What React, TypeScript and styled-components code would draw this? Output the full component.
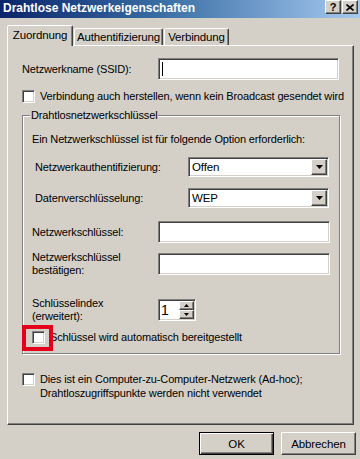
import React from 'react'
import styled, { createGlobalStyle } from 'styled-components'

const GlobalStyle = createGlobalStyle`
  html, body {
    margin: 0;
    padding: 0;
    background: #d4d0c8;
  }
  * {
    box-sizing: border-box;
  }
`

const Window = styled.div`
  width: 360px;
  height: 459px;
  display: flex;
  flex-direction: column;
  background: #d4d0c8;
  font-family: "Liberation Sans", Arial, sans-serif;
  font-size: 11px;
  letter-spacing: -0.15px;
  color: #000;
  overflow: hidden;
`

const TitleBar = styled.div`
  height: 18px;
  display: flex;
  align-items: center;
  justify-content: space-between;
  padding: 0 2px 3px 3px;
  background: linear-gradient(90deg, #0a246a 0%, #3a6ea5 45%, #a6caf0 100%);
`

const TitleText = styled.span`
  color: #fff;
  font-weight: bold;
  font-size: 12px;
  letter-spacing: 0;
`

const TitleButtons = styled.div`
  display: flex;
  gap: 1px;
  align-self: flex-start;
`

const TitleButton = styled.div`
  width: 16px;
  height: 14px;
  display: flex;
  align-items: center;
  justify-content: center;
  background: #d4d0c8;
  border: 1px solid;
  border-color: #fff #404040 #404040 #fff;
  box-shadow: inset -1px -1px #808080;
  font-weight: bold;
  font-size: 11px;
  line-height: 1;
`

const TabStrip = styled.div`
  height: 20px;
  margin-top: 7px;
  padding-left: 7px;
  display: flex;
  align-items: flex-end;
  position: relative;
  z-index: 1;
`

const Tab = styled.div<{ $active?: boolean; $w: number }>`
  width: ${p => p.$w}px;
  height: ${p => (p.$active ? '21px' : '17px')};
  margin-bottom: ${p => (p.$active ? '-1px' : '0')};
  margin-left: ${p => (p.$active ? '0' : '1px')};
  padding-top: ${p => (p.$active ? '3px' : '2px')};
  text-align: center;
  background: #d4d0c8;
  border: 1px solid;
  border-bottom: none;
  border-color: #fff #404040 transparent #fff;
  border-radius: 2px 2px 0 0;
  box-shadow: inset -1px 0 #808080;
  white-space: nowrap;
  font-size: 11.5px;
`

const Panel = styled.div`
  height: 380px;
  margin: 0 6px 0 7px;
  padding: 12px 13px 0 14px;
  display: flex;
  flex-direction: column;
  border: 1px solid;
  border-color: #fff #404040 #404040 #fff;
  box-shadow: inset -1px -1px #808080;
`

const FieldRow = styled.div<{ $h: number; $mt: number; $indent?: number }>`
  height: ${p => p.$h}px;
  margin-top: ${p => p.$mt}px;
  padding-left: ${p => p.$indent ?? 0}px;
  display: flex;
  align-items: center;
`

const Label = styled.div<{ $w: number }>`
  width: ${p => p.$w}px;
  flex: none;
  line-height: 13px;
`

const Sunken = styled.div<{ $w: number; $h?: number }>`
  width: ${p => p.$w}px;
  height: ${p => p.$h ?? 22}px;
  flex: none;
  position: relative;
  display: flex;
  align-items: center;
  background: #fff;
  border: 1px solid;
  border-color: #808080 #fff #fff #808080;
  box-shadow: inset 1px 1px #404040, inset -1px -1px #d4d0c8;
`

const Caret = styled.span`
  width: 1px;
  height: 14px;
  margin-left: 3px;
  background: #000;
`

const SelectValue = styled.span`
  flex: 1;
  padding-left: 3px;
  font-size: 11.5px;
`

const Raised = styled.div`
  background: #d4d0c8;
  border: 1px solid;
  border-color: #fff #404040 #404040 #fff;
  box-shadow: inset -1px -1px #808080;
  display: flex;
  align-items: center;
  justify-content: center;
`

const DropButton = styled(Raised)`
  width: 16px;
  height: 16px;
  margin-right: 1px;
`

const SpinValue = styled.span`
  flex: 1;
  padding-left: 2px;
  font-size: 14px;
`

const SpinButtons = styled.div`
  display: flex;
  flex-direction: column;
  align-self: stretch;
  padding: 1px 1px 1px 0;
`

const SpinButton = styled(Raised)`
  width: 15px;
  flex: 1;
`

const CheckRow = styled.div<{ $mt: number; $indent?: number; $gap?: number }>`
  margin-top: ${p => p.$mt}px;
  padding-left: ${p => p.$indent ?? 0}px;
  display: flex;
  align-items: flex-start;
  gap: ${p => p.$gap ?? 5}px;
  line-height: 14px;
  white-space: nowrap;
`

const CheckBox = styled.span`
  width: 13px;
  height: 13px;
  flex: none;
  margin-top: 1px;
  position: relative;
  background: #fff;
  border: 1px solid;
  border-color: #808080 #fff #fff #808080;
  box-shadow: inset 1px 1px #404040, inset -1px -1px #d4d0c8;
`

const Highlight = styled.span`
  position: absolute;
  left: -11px;
  top: -7px;
  width: 31px;
  height: 26px;
  border: 4px solid #e4001a;
  pointer-events: none;
`

const Group = styled.fieldset`
  margin: 6px 0 0 0;
  padding: 11px 9px 9px 9px;
  width: 318px;
  border: 1px solid #808080;
  box-shadow: inset 1px 1px #fff, 1px 1px #fff;
`

const Legend = styled.legend`
  margin-left: -2px;
  padding: 0 1px;
  line-height: 13px;
  background: #d4d0c8;
`

const Intro = styled.div`
  line-height: 13px;
`

const Footer = styled.div`
  margin-top: 7px;
  padding-right: 4px;
  display: flex;
  justify-content: flex-end;
  gap: 7px;
`

const Button = styled.button<{ $default?: boolean }>`
  width: 75px;
  height: 23px;
  padding: 0;
  font-family: inherit;
  font-size: 11.5px;
  letter-spacing: -0.1px;
  color: #000;
  background: #d4d0c8;
  border: 1px solid;
  border-color: ${p => (p.$default ? '#000' : '#fff #404040 #404040 #fff')};
  box-shadow: ${p =>
    p.$default
      ? 'inset 1px 1px #fff, inset -1px -1px #404040, inset -2px -2px #808080'
      : 'inset -1px -1px #808080'};
`

function Arrow({ up }: { up?: boolean }) {
  return (
    <svg width="7" height="4" viewBox="0 0 7 4">
      <path d={up ? 'M3.5 0 L7 4 L0 4 Z' : 'M0 0 L7 0 L3.5 4 Z'} fill="#000" />
    </svg>
  )
}

function SmallArrow({ up }: { up?: boolean }) {
  return (
    <svg width="5" height="3" viewBox="0 0 5 3">
      <path d={up ? 'M2.5 0 L5 3 L0 3 Z' : 'M0 0 L5 0 L2.5 3 Z'} fill="#000" />
    </svg>
  )
}

function Select({ value }: { value: string }) {
  return (
    <Sunken $w={141} $h={20}>
      <SelectValue>{value}</SelectValue>
      <DropButton>
        <Arrow />
      </DropButton>
    </Sunken>
  )
}

export default function App() {
  return (
    <>
      <GlobalStyle />
      <Window>
        <TitleBar>
          <TitleText>Drahtlose Netzwerkeigenschaften</TitleText>
          <TitleButtons>
            <TitleButton>?</TitleButton>
            <TitleButton>
              <svg width="8" height="7" viewBox="0 0 8 7">
                <path d="M0.5 0.5 L7.5 6.5 M7.5 0.5 L0.5 6.5" stroke="#000" strokeWidth="1.6" />
              </svg>
            </TitleButton>
          </TitleButtons>
        </TitleBar>

        <TabStrip>
          <Tab $active $w={66}>Zuordnung</Tab>
          <Tab $w={89}>Authentifizierung</Tab>
          <Tab $w={65}>Verbindung</Tab>
        </TabStrip>

        <Panel>
          <FieldRow $h={22} $mt={0}>
            <Label $w={136}>Netzwerkname (SSID):</Label>
            <Sunken $w={181}>
              <Caret />
            </Sunken>
          </FieldRow>

          <CheckRow $mt={9}>
            <CheckBox />
            <span>Verbindung auch herstellen, wenn kein Broadcast gesendet wird</span>
          </CheckRow>

          <Group>
            <Legend>Drahtlosnetzwerkschlüssel</Legend>
            <Intro>Ein Netzwerkschlüssel ist für folgende Option erforderlich:</Intro>

            <FieldRow $h={20} $mt={11} $indent={3}>
              <Label $w={153}>Netzwerkauthentifizierung:</Label>
              <Select value="Offen" />
            </FieldRow>
            <FieldRow $h={20} $mt={11} $indent={3}>
              <Label $w={153}>Datenverschlüsselung:</Label>
              <Select value="WEP" />
            </FieldRow>

            <FieldRow $h={22} $mt={13}>
              <Label $w={126}>Netzwerkschlüssel:</Label>
              <Sunken $w={172} />
            </FieldRow>
            <FieldRow $h={26} $mt={8}>
              <Label $w={126}>
                Netzwerkschlüssel
                <br />
                bestätigen:
              </Label>
              <Sunken $w={172} />
            </FieldRow>

            <FieldRow $h={26} $mt={20}>
              <Label $w={126}>
                Schlüsselindex
                <br />
                (erweitert):
              </Label>
              <Sunken $w={38}>
                <SpinValue>1</SpinValue>
                <SpinButtons>
                  <SpinButton>
                    <SmallArrow up />
                  </SpinButton>
                  <SpinButton>
                    <SmallArrow />
                  </SpinButton>
                </SpinButtons>
              </Sunken>
            </FieldRow>

            <CheckRow $mt={7} $gap={5}>
              <CheckBox>
                <Highlight />
              </CheckBox>
              <span>Schlüssel wird automatisch bereitgestellt</span>
            </CheckRow>
          </Group>

          <CheckRow $mt={18}>
            <CheckBox />
            <span>
              Dies ist ein Computer-zu-Computer-Netzwerk (Ad-hoc);
              <br />
              Drahtloszugriffspunkte werden nicht verwendet
            </span>
          </CheckRow>
        </Panel>

        <Footer>
          <Button $default>OK</Button>
          <Button>Abbrechen</Button>
        </Footer>
      </Window>
    </>
  )
}
